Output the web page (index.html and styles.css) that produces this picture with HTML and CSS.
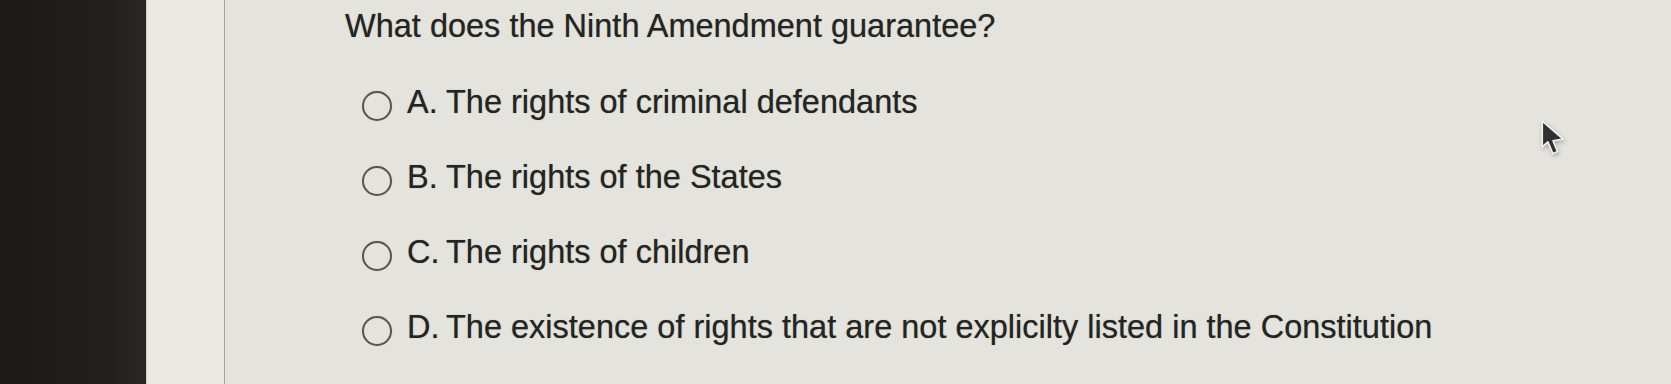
FILE: index.html
```html
<!DOCTYPE html>
<html lang="en">
<head>
    <meta charset="UTF-8">
    <meta name="viewport" content="width=device-width, initial-scale=1.0">
    <title>Ninth Amendment Question</title>
    <link rel="stylesheet" href="styles.css">
</head>
<body>
    <div class="screen">
        <div class="bezel"></div>
        <div class="sidebar"></div>

        <div class="main">
            <div class="question">What does the Ninth Amendment guarantee?</div>

            <div class="options">
                <label class="option">
                    <span class="radio"></span>
                    <span class="letter">A.</span>
                    <span class="answer">The rights of criminal defendants</span>
                </label>
                <label class="option">
                    <span class="radio"></span>
                    <span class="letter">B.</span>
                    <span class="answer">The rights of the States</span>
                </label>
                <label class="option">
                    <span class="radio"></span>
                    <span class="letter">C.</span>
                    <span class="answer">The rights of children</span>
                </label>
                <label class="option">
                    <span class="radio"></span>
                    <span class="letter">D.</span>
                    <span class="answer">The existence of rights that are not explicilty listed in the Constitution</span>
                </label>
            </div>
        </div>

        <!-- mouse pointer sitting over the page -->
        <svg class="pointer" viewBox="0 0 22 33" width="25" height="37">
            <path d="M1 1 L1 24 L6 19.5 L10.5 30 L14.5 28 L10.5 18.5 L19.5 17 Z"
                  fill="#2e3230" stroke="#f4f4f2" stroke-width="1.4" stroke-linejoin="round"/>
        </svg>
    </div>
</body>
</html>
```

FILE: styles.css
```css
body {
    margin: 0;
    font-family: 'Liberation Sans', Arial, Helvetica, sans-serif;
    background: #e5e3dd;
    overflow: hidden;
}

.screen {
    position: relative;
    display: flex;
    height: 384px;
    background: #e5e3dd;
}

.bezel {
    width: 146px;
    flex-shrink: 0;
    background: linear-gradient(90deg, #1b1a18 0%, #22211f 80%, #2a2826 100%);
    box-shadow: 1px 0 0 #d9c9c6, 2px 0 0 #f2f0ec;
}

.sidebar {
    width: 77px;
    flex-shrink: 0;
    margin-left: 1px;
    background: #ebe9e4;
    border-right: 1px solid #a3a29d;
}

.main {
    flex: 1;
    padding-left: 120px;
    padding-top: 6px;
    color: #242422;
    text-shadow: 0 0 1px rgba(0,0,0,0.45);
}

.question {
    font-size: 32.5px;
    line-height: 40px;
    white-space: nowrap;
}

.options {
    display: flex;
    flex-direction: column;
    gap: 35px;
    margin-top: 36px;
    padding-left: 17px;
}

.option {
    display: flex;
    align-items: flex-start;
    height: 40px;
    font-size: 32.5px;
    line-height: 40px;
    white-space: nowrap;
}

.radio {
    width: 26px;
    height: 26px;
    margin-top: 9px;
    border: 2px solid #555552;
    border-radius: 50%;
    flex-shrink: 0;
    box-shadow: 0 0 0.8px rgba(0,0,0,0.4);
}

.letter {
    width: 39px;
    margin-left: 15px;
    flex-shrink: 0;
}

.pointer {
    position: absolute;
    left: 1541px;
    top: 120px;
    filter: blur(0.5px) drop-shadow(1px 2px 2px rgba(0,0,0,0.25));
}
```
